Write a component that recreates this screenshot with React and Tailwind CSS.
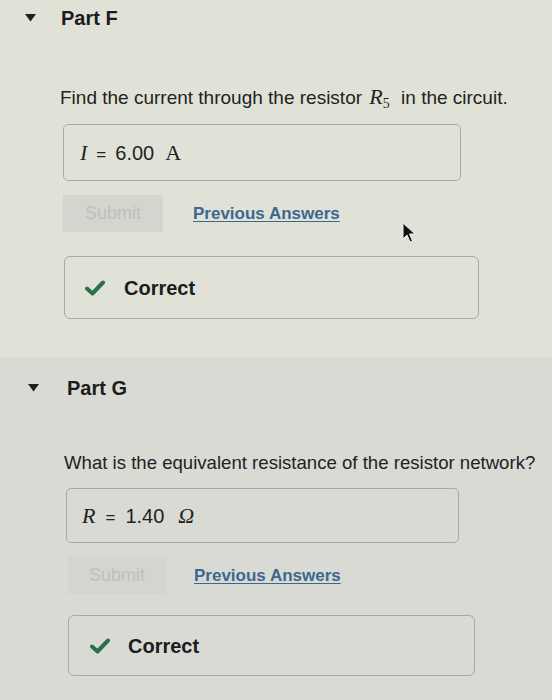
import React from "react";

const Caret = () => (
  <svg width="11" height="8" viewBox="0 0 11 8" className="shrink-0">
    <path d="M0 0 L11 0 L5.5 7.5 Z" fill="#1f1f1f" />
  </svg>
);

const Check = () => (
  <svg width="20" height="16" viewBox="0 0 20 16" className="shrink-0">
    <path
      d="M2 8.5 L7.5 13.5 L18 2.5"
      fill="none"
      stroke="#2c7047"
      strokeWidth="4"
      strokeLinecap="round"
      strokeLinejoin="round"
    />
  </svg>
);

const Cursor = () => (
  <svg width="16" height="22" viewBox="0 0 16 22" className="absolute left-[402px] top-[222px]">
    <path d="M1 1 L1 17 L5 13 L8 20 L10.5 19 L7.5 12 L13 12 Z" fill="#111" stroke="#eee" strokeWidth="1" />
  </svg>
);

const math = "font-['Liberation_Serif',serif]";

const Part = ({ title, question, answer, caretPl, titleGap, ...s }) => (
  <div className={s.wrap}>
    {/* header */}
    <div className={`flex items-center ${caretPl}`}>
      <Caret />
      <h2 className={`${titleGap} text-[20px] leading-6 font-bold text-[#1c1c1c]`}>{title}</h2>
    </div>

    <div className={s.body}>
      <p className={`${s.qSize} leading-6 text-[#222]`}>{question}</p>

      {/* answer field */}
      <div className={`${s.input} flex items-center border border-[#a9aaa4] rounded-[5px]`}>
        {answer}
      </div>

      {/* submit row */}
      <div className={`${s.row} flex items-center`}>
        <div className={`${s.btn} flex items-center justify-center bg-[#d4d5ce] text-[18px] text-[#bfc0b9]`}>
          Submit
        </div>
        <a className={`${s.linkGap} text-[17px] font-bold text-[#3b6890] underline underline-offset-2`}>
          Previous Answers
        </a>
      </div>

      {/* feedback */}
      <div className={`${s.correct} flex items-center border border-[#a9aaa4] rounded-[6px]`}>
        <Check />
        <span className={`${s.correctGap} text-[20px] font-bold text-[#1c1c1c]`}>Correct</span>
      </div>
    </div>
  </div>
);

export default function App() {
  return (
    <div className="relative w-[552px] h-[700px] overflow-hidden font-['Liberation_Sans',Arial,sans-serif]">
      <Part
        wrap="h-[358px] bg-[#e1e2d7] pt-[6px]"
        caretPl="pl-[25px]"
        titleGap="ml-[25px]"
        title="Part F"
        body="pl-[60px] pt-[55px]"
        qSize="text-[19px]"
        question={
          <>
            Find the current through the resistor{" "}
            <span className={`${math} italic text-[22px] ml-[2px]`}>R</span>
            <span className={`${math} text-[14px] relative top-[4px] mr-[6px]`}>5</span> in the circuit.
          </>
        }
        input="ml-[3px] mt-[12px] w-[398px] h-[57px] pl-[16px]"
        answer={
          <span className="text-[20px] text-[#222] flex items-baseline">
            <span className={`${math} italic text-[22px]`}>I</span>
            <span className="mx-[9px] text-[17px]">=</span>
            <span>6.00</span>
            <span className={`${math} ml-[11px] text-[22px]`}>A</span>
          </span>
        }
        row="ml-[3px] mt-[14px]"
        btn="w-[100px] h-[37px]"
        linkGap="ml-[30px]"
        correct="ml-[4px] mt-[24px] w-[415px] h-[63px] pl-[20px]"
        correctGap="ml-[19px]"
      />
      <Part
        wrap="h-[342px] bg-[#d9dad4] pt-[18px]"
        caretPl="pl-[28px]"
        titleGap="ml-[28px]"
        title="Part G"
        body="pl-[64px] pt-[51px]"
        qSize="text-[18.6px]"
        question="What is the equivalent resistance of the resistor network?"
        input="ml-[2px] mt-[13px] w-[393px] h-[55px] pl-[15px]"
        answer={
          <span className="text-[20px] text-[#222] flex items-baseline">
            <span className={`${math} italic text-[22px]`}>R</span>
            <span className="mx-[10px] text-[17px]">=</span>
            <span>1.40</span>
            <span className={`${math} italic ml-[14px] text-[22px]`}>Ω</span>
          </span>
        }
        row="ml-[4px] mt-[14px]"
        btn="w-[98px] h-[37px]"
        linkGap="ml-[28px]"
        correct="ml-[4px] mt-[21px] w-[407px] h-[61px] pl-[21px]"
        correctGap="ml-[18px]"
      />
      <Cursor />
    </div>
  );
}
